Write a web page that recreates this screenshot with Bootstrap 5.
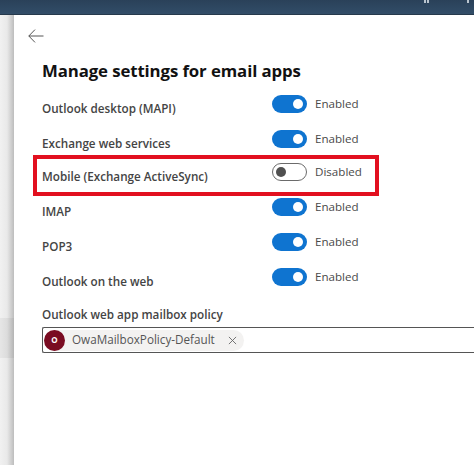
<!DOCTYPE html>
<html lang="en">
<head>
<meta charset="utf-8">
<title>Manage settings for email apps</title>
<link href="https://cdn.jsdelivr.net/npm/bootstrap@5.3.0/dist/css/bootstrap.min.css" rel="stylesheet">
<style>
html, body { width: 474px; height: 465px; overflow: hidden; margin: 0; }
body { font-family: "Open Sans", "Noto Sans", sans-serif; background: #fff; color: #333; }
.top-strip { height: 15px; background: linear-gradient(#2a4159, #324d68); border-bottom: 1px solid #26394c; position: relative; }
.top-strip i { position: absolute; top: 0; width: 2px; height: 3px; background: #b9c4ce; }
.shell { height: 450px; }
.side-strip { width: 14px; flex: none; background: linear-gradient(90deg, #f1f1f1 0, #e9e9e9 50%, #bdbdbd 100%); }
.side-strip div { height: 40px; margin-top: 303px; background: linear-gradient(90deg, #e6e6e6 0, #dcdcdc 50%, #b4b4b4 100%); }
.pane { flex: 1; min-width: 0; padding: 13px 0 0 28px; }
.back-btn { display: block; width: 16px; height: 16px; padding: 0; margin: 0 0 15px -14.5px; border: 0; background: none; line-height: 0; }
.pane-title { font-size: 16.8px; font-weight: 700; color: #111; line-height: 24px; margin: 0 0 7px; letter-spacing: -.1px; }
.set-row { height: 35px; }
.set-label { width: 230px; flex: none; font-size: 11.7px; font-weight: 600; color: #444; margin-top: 2px; }
.sw { width: 35px; height: 18px; border-radius: 9px; flex: none; margin-bottom: 8px; display: flex; align-items: center; padding: 0 4px; }
.sw b { display: block; width: 10px; height: 10px; border-radius: 50%; }
.sw.on { background: #0f74d0; justify-content: flex-end; }
.sw.on b { background: #fff; }
.sw.off { background: #fff; border: 1px solid #6b6b6b; padding: 0 3px; }
.sw.off b { background: #505050; }
.sw-text { font-size: 11.6px; color: #4a4a4a; margin: 0 0 8px 8px; }
.hot-row { outline: 4px solid #e2101f; margin: -1.5px 0 2px -5.5px; padding: 2px 0 0 5.5px; height: 33px; width: 338px; }
.policy-label { font-size: 11.7px; font-weight: 600; color: #444; line-height: 18px; margin: 6px 0 4px; }
.policy-box { height: 26px; margin-right: -2px; border: 1px solid #555; border-radius: 2px; border-right: 0; padding: 1px 0 0 1px; }
.pill { height: 21px; border-radius: 11px; background: #f3f2f1; padding-right: 7px; }
.avatar { width: 21px; height: 21px; border-radius: 50%; background: #7a0c22; color: #fff; font-size: 8px; font-weight: 700; }
.pill-text { font-size: 11.7px; color: #555; margin: 0 13px 0 7px; white-space: nowrap; }
.pill-x { line-height: 0; }
</style>
</head>
<body>
<div class="top-strip"><i style="left:424px"></i><i style="left:427px"></i><i style="left:467px"></i></div>
<div class="shell d-flex">
  <div class="side-strip"><div></div></div>
  <div class="pane">
    <button class="back-btn" type="button" aria-label="Back">
      <svg width="16" height="16" viewBox="0 0 16 16" fill="none" stroke="#555" stroke-width="1"><path d="M.8 8H15.5M7 1.6.8 8 7 14.4"/></svg>
    </button>
    <h1 class="pane-title">Manage settings for email apps</h1>
    <div class="set-row d-flex align-items-center"><span class="set-label">Outlook desktop (MAPI)</span><span class="sw on"><b></b></span><span class="sw-text">Enabled</span></div>
    <div class="set-row d-flex align-items-center"><span class="set-label">Exchange web services</span><span class="sw on"><b></b></span><span class="sw-text">Enabled</span></div>
    <div class="hot-row d-flex align-items-center"><span class="set-label">Mobile (Exchange ActiveSync)</span><span class="sw off"><b></b></span><span class="sw-text">Disabled</span></div>
    <div class="set-row d-flex align-items-center"><span class="set-label">IMAP</span><span class="sw on"><b></b></span><span class="sw-text">Enabled</span></div>
    <div class="set-row d-flex align-items-center"><span class="set-label">POP3</span><span class="sw on"><b></b></span><span class="sw-text">Enabled</span></div>
    <div class="set-row d-flex align-items-center"><span class="set-label">Outlook on the web</span><span class="sw on"><b></b></span><span class="sw-text">Enabled</span></div>
    <div class="policy-label">Outlook web app mailbox policy</div>
    <div class="policy-box d-flex align-items-center">
      <div class="pill d-inline-flex align-items-center">
        <span class="avatar d-flex align-items-center justify-content-center">O</span>
        <span class="pill-text">OwaMailboxPolicy-Default</span>
        <span class="pill-x"><svg width="9" height="9" viewBox="0 0 10 10" stroke="#666" stroke-width="1"><path d="M1 1 9 9M9 1 1 9"/></svg></span>
      </div>
    </div>
  </div>
</div>
</body>
</html>
